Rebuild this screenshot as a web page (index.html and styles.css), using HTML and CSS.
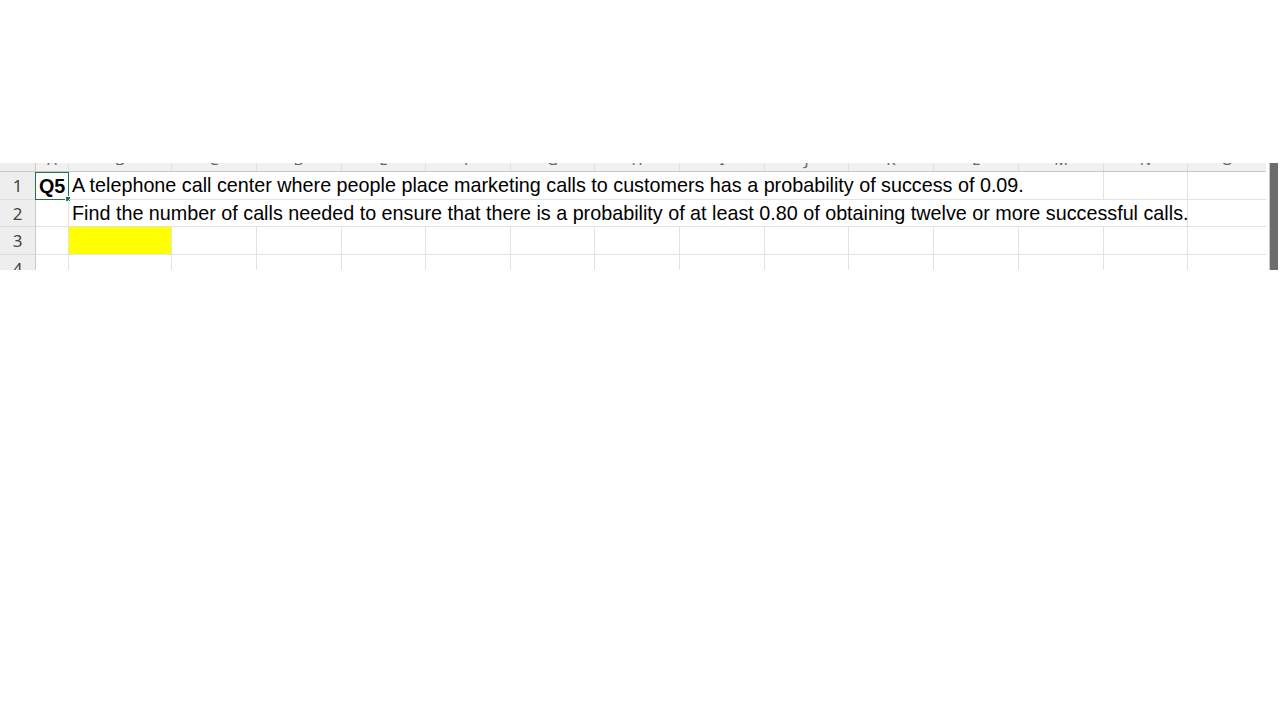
FILE: index.html
```html
<!DOCTYPE html>
<html>
<head>
<meta charset="utf-8">
<link rel="stylesheet" href="styles.css">
</head>
<body>
<div class="page">
  <div class="sheet">
    <div class="grid">
      <div class="row head">
        <div class="rh corner"></div>
        <div class="ch w-a"><span>A</span></div>
        <div class="ch w-b"><span>B</span></div>
        <div class="ch w-c"><span>C</span></div>
        <div class="ch w-d"><span>D</span></div>
        <div class="ch w-e"><span>E</span></div>
        <div class="ch w-f"><span>F</span></div>
        <div class="ch w-g"><span>G</span></div>
        <div class="ch w-h"><span>H</span></div>
        <div class="ch w-i"><span>I</span></div>
        <div class="ch w-j"><span>J</span></div>
        <div class="ch w-k"><span>K</span></div>
        <div class="ch w-l"><span>L</span></div>
        <div class="ch w-m"><span>M</span></div>
        <div class="ch w-n"><span>N</span></div>
        <div class="ch w-o"><span>O</span></div>
      </div>
      <div class="row r1">
        <div class="rh">1</div>
        <div class="cell w-a selected"><b>Q5</b><i class="handle"></i></div>
        <div class="cell span-bm text">A telephone call center where people place marketing calls to customers has a probability of success of 0.09.</div>
        <div class="cell w-n"></div>
        <div class="cell w-o"></div>
      </div>
      <div class="row r2">
        <div class="rh">2</div>
        <div class="cell w-a"></div>
        <div class="cell span-bn text">Find the number of calls needed to ensure that there is a probability of at least 0.80 of obtaining twelve or more successful calls.</div>
        <div class="cell w-o"></div>
      </div>
      <div class="row r3">
        <div class="rh">3</div>
        <div class="cell w-a"></div>
        <div class="cell w-b answer"></div>
        <div class="cell w-c"></div>
        <div class="cell w-d"></div>
        <div class="cell w-e"></div>
        <div class="cell w-f"></div>
        <div class="cell w-g"></div>
        <div class="cell w-h"></div>
        <div class="cell w-i"></div>
        <div class="cell w-j"></div>
        <div class="cell w-k"></div>
        <div class="cell w-l"></div>
        <div class="cell w-m"></div>
        <div class="cell w-n"></div>
        <div class="cell w-o"></div>
      </div>
      <div class="row cut">
        <div class="rh">4</div>
        <div class="cell w-a"></div>
        <div class="cell w-b"></div>
        <div class="cell w-c"></div>
        <div class="cell w-d"></div>
        <div class="cell w-e"></div>
        <div class="cell w-f"></div>
        <div class="cell w-g"></div>
        <div class="cell w-h"></div>
        <div class="cell w-i"></div>
        <div class="cell w-j"></div>
        <div class="cell w-k"></div>
        <div class="cell w-l"></div>
        <div class="cell w-m"></div>
        <div class="cell w-n"></div>
        <div class="cell w-o"></div>
      </div>
    </div>
    <div class="scrollbar"></div>
  </div>
</div>
</body>
</html>
```

FILE: styles.css
```css
html, body {
  margin: 0;
  padding: 0;
  background: #ffffff;
}

.page {
  width: 1280px;
  height: 720px;
  padding-top: 163px;
  box-sizing: border-box;
  font-family: "Liberation Sans", Arial, sans-serif;
}

.sheet {
  display: flex;
  height: 107px;
  overflow: hidden;
}

.grid {
  width: 1266px;
  display: flex;
  flex-direction: column;
}

.row {
  display: flex;
  height: 27px;
  flex: none;
}

.row.head {
  height: 9px;
  border-bottom: 1px solid #c6c6c6;
  box-sizing: border-box;
}

.row.r1 { height: 28px; }
.row.r2 { height: 27px; }
.row.r3 { height: 28px; }
.row.cut { height: 16px; }

.rh {
  width: 36px;
  flex: none;
  box-sizing: border-box;
  background: #eeeeee;
  border-right: 1px solid #c9c9c9;
  border-bottom: 1px solid #dcdcdc;
  color: #444444;
  font-family: "Noto Sans", "Liberation Sans", sans-serif;
  font-size: 17px;
  line-height: 28px;
  text-align: center;
}

.rh.corner {
  border-bottom: none;
}

.ch {
  flex: none;
  box-sizing: border-box;
  background: #f1f1f1;
  border-right: 1px solid #dedede;
  overflow: hidden;
  text-align: center;
  color: #666666;
  font-family: "Noto Sans", "Liberation Sans", sans-serif;
  font-size: 15px;
  line-height: 20px;
}

.ch span {
  display: block;
  margin-top: -14px;
}

.cell {
  flex: none;
  box-sizing: border-box;
  border-right: 1px solid #e2e2e2;
  border-bottom: 1px solid #e2e2e2;
  font-size: 19.76px;
  line-height: 27px;
  color: #000000;
  white-space: nowrap;
  position: relative;
}

.w-a { width: 33px; }
.w-b { width: 103px; }
.w-c { width: 85px; }
.w-d { width: 85px; }
.w-e { width: 84px; }
.w-f { width: 85px; }
.w-g { width: 84px; }
.w-h { width: 85px; }
.w-i { width: 85px; }
.w-j { width: 84px; }
.w-k { width: 85px; }
.w-l { width: 85px; }
.w-m { width: 85px; }
.w-n { width: 84px; }
.w-o { width: 78px; border-right: none; }

.span-bm { width: 1035px; }
.span-bn { width: 1119px; }

.text {
  padding-left: 3px;
}

.selected {
  border: 1px solid #217346;
  margin-left: -1px;
  width: 34px;
  padding-left: 3px;
  line-height: 26px;
}

.selected b {
  font-weight: bold;
}

.handle {
  position: absolute;
  right: -3px;
  bottom: -3px;
  width: 4px;
  height: 4px;
  background: #217346;
  border: 1px solid #ffffff;
}

.answer {
  background: #ffff00;
}

.scrollbar {
  width: 8px;
  margin-left: 3px;
  background: #6c6c6c;
  border-left: 1px solid #c8c8c8;
}
```
